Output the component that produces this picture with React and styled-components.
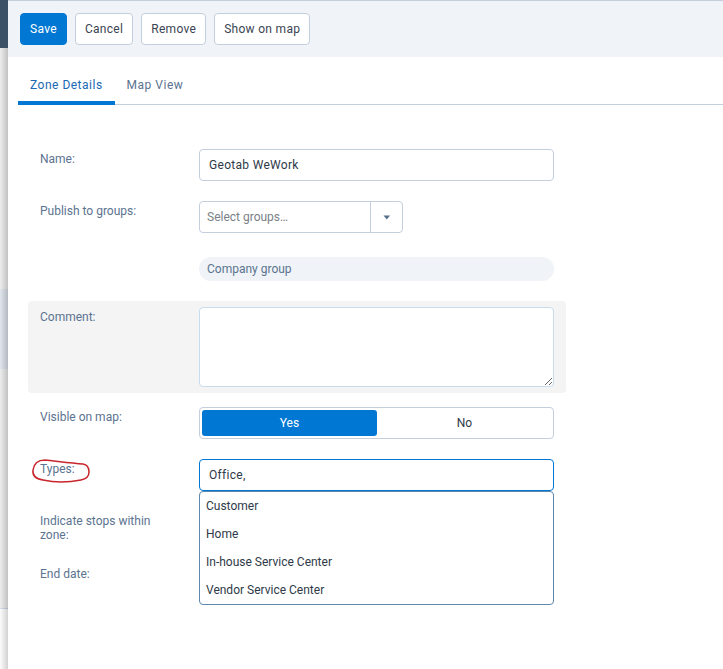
import React from "react"
import styled, { createGlobalStyle } from 'styled-components';

const GlobalStyle = createGlobalStyle`
  html, body {
    margin: 0;
    padding: 0;
    background: #fff;
    overflow: hidden;
  }
  * {
    box-sizing: border-box;
  }
`;

const Shell = styled.div`
  display: flex;
  height: 100vh;
  font-family: Roboto, "Liberation Sans", sans-serif;
  font-size: 12px;
`;

const SideStrip = styled.div`
  position: relative;
  flex: 0 0 8px;
  display: flex;
  flex-direction: column;
  &::after {
    content: "";
    position: absolute;
    inset: 48px 0 0 0;
    background: linear-gradient(to right, rgba(255,255,255,0.3), rgba(0,0,0,0.16));
  }
`;

const StripPart = styled.div`
  flex: ${p => p.$h ? `0 0 ${p.$h}px` : '1'};
  background: ${p => p.$bg};
`;

const Main = styled.div`
  flex: 1;
  min-width: 0;
`;

const Toolbar = styled.div`
  display: flex;
  gap: 8px;
  height: 57px;
  padding: 12px 12px;
  background: #f0f3f7;
  border-top: 1px solid #c3cfdd;
`;

const Button = styled.button`
  height: 32px;
  padding: 0 9px;
  font: inherit;
  letter-spacing: 0.3px;
  color: ${p => p.$primary ? '#fff' : '#3a4452'};
  background: ${p => p.$primary ? '#0078d3' : '#fff'};
  border: 1px solid ${p => p.$primary ? '#0078d3' : '#c3cfdd'};
  border-radius: 4px;
`;

const TabBar = styled.div`
  display: flex;
  margin-left: 10px;
  padding-top: 8px;
  border-bottom: 1px solid #c3cfdd;
`;

const Tab = styled.div`
  display: flex;
  align-items: center;
  height: 40px;
  margin-bottom: -1px;
  padding: 4px 12px 0;
  letter-spacing: 0.5px;
  color: ${p => p.$active ? '#1a68b3' : '#5b7390'};
  border-bottom: 4px solid ${p => p.$active ? '#0078d3' : 'transparent'};
`;

const Form = styled.div`
  padding: 44px 0 0 20px;
  width: 558px;
`;

const Row = styled.div`
  position: relative;
  display: flex;
  margin-bottom: ${p => p.$gap ?? 20}px;
  padding: ${p => p.$shaded ? '6px 12px' : '0 12px'};
  background: ${p => p.$shaded ? '#f4f4f4' : 'transparent'};
  border-radius: ${p => p.$shaded ? '4px' : '0'};
`;

const Label = styled.div`
  flex: 0 0 159px;
  padding: 3px 20px 0 0;
  line-height: 14px;
  color: #5b7390;
`;

const Control = styled.div`
  position: relative;
  flex: 0 0 355px;
`;

const TextInput = styled.input`
  display: block;
  width: 100%;
  height: 32px;
  padding: 0 9px;
  font: inherit;
  letter-spacing: 0.3px;
  color: #2f3a48;
  background: #fff;
  border: 1px solid ${p => p.$focused ? '#0078d3' : '#c3cfdd'};
  border-radius: 4px;
  outline: none;
`;

const CommentBox = styled.textarea`
  display: block;
  width: 100%;
  height: 80px;
  background: #fff;
  border: 1px solid #c9dcec;
  border-radius: 4px;
  outline: none;
`;

const SelectBox = styled.div`
  display: flex;
  width: 204px;
  height: 32px;
  background: #fff;
  border: 1px solid #c3cfdd;
  border-radius: 4px;
`;

const SelectText = styled.div`
  flex: 1;
  padding-left: 7px;
  line-height: 30px;
  color: #7b7f86;
`;

const SelectArrow = styled.div`
  display: flex;
  flex: 0 0 32px;
  align-items: center;
  justify-content: center;
  border-left: 1px solid #c3cfdd;
`;

const Chip = styled.div`
  height: 24px;
  padding-left: 8px;
  line-height: 24px;
  color: #5b7390;
  background: #f0f3f7;
  border-radius: 12px;
`;

const Toggle = styled.div`
  display: flex;
  height: 32px;
  padding: 2px 1px 2px 2px;
  background: #fff;
  border: 1px solid #c3cfdd;
  border-radius: 4px;
`;

const ToggleOption = styled.div`
  flex: 1;
  line-height: 26px;
  text-align: center;
  color: ${p => p.$on ? '#fff' : '#2f3a48'};
  background: ${p => p.$on ? '#0078d3' : 'transparent'};
  border-radius: 3px;
`;

const Dropdown = styled.div`
  position: absolute;
  top: 32px;
  left: 0;
  right: 0;
  z-index: 2;
  height: 114px;
  background: #fff;
  border: 1px solid #5f87ad;
  border-radius: 4px;
`;

const DropdownItem = styled.div`
  height: 28px;
  padding-left: 6px;
  line-height: 28px;
  color: #2f3a48;
`;

const Scribble = styled.svg`
  position: absolute;
  top: -1px;
  left: 3px;
  width: 60px;
  height: 26px;
  overflow: visible;
  pointer-events: none;
`;

const App = () => {
  return (
    <Shell>
      <GlobalStyle />
      <SideStrip>
        <StripPart $h={48} $bg="#3d5166" />
        <StripPart $h={241} $bg="#e6e6e6" />
        <StripPart $h={80} $bg="#d6dce6" />
        <StripPart $h={239} $bg="#e6e6e6" />
        <StripPart $h={1} $bg="#c3cfdd" />
        <StripPart $bg="#fbfbfb" />
      </SideStrip>
      <Main>
        <Toolbar>
          <Button $primary>Save</Button>
          <Button>Cancel</Button>
          <Button>Remove</Button>
          <Button>Show on map</Button>
        </Toolbar>
        <TabBar>
          <Tab $active>Zone Details</Tab>
          <Tab>Map View</Tab>
        </TabBar>
        <Form>
          <Row>
            <Label>Name:</Label>
            <Control><TextInput value="Geotab WeWork" readOnly /></Control>
          </Row>
          <Row $gap={24}>
            <Label>Publish to groups:</Label>
            <Control>
              <SelectBox>
                <SelectText>Select groups…</SelectText>
                <SelectArrow>
                  <svg width="8" height="5" viewBox="0 0 8 5"><path d="M0.5 0.5h6.5L3.75 4.5z" fill="#56708c" /></svg>
                </SelectArrow>
              </SelectBox>
            </Control>
          </Row>
          <Row>
            <Label />
            <Control><Chip>Company group</Chip></Control>
          </Row>
          <Row $shaded $gap={14}>
            <Label>Comment:</Label>
            <Control><CommentBox readOnly /></Control>
          </Row>
          <Row>
            <Label>Visible on map:</Label>
            <Control>
              <Toggle>
                <ToggleOption $on>Yes</ToggleOption>
                <ToggleOption>No</ToggleOption>
              </Toggle>
            </Control>
          </Row>
          <Row>
            <Label>Types:</Label>
            <Scribble viewBox="0 0 60 26">
              <path
                d="M2 12C3 5 8 2 14 2C24 3 40 5 52 6C57 7 58 11 58 14C58 19 55 21 50 22C40 24 25 25 12 22C6 21 1 19 2 12Z"
                fill="none"
                stroke="#c8262c"
                strokeWidth="1.5"
              />
            </Scribble>
            <Control>
              <TextInput $focused value="Office," readOnly />
              <Dropdown>
                <DropdownItem>Customer</DropdownItem>
                <DropdownItem>Home</DropdownItem>
                <DropdownItem>In-house Service Center</DropdownItem>
                <DropdownItem>Vendor Service Center</DropdownItem>
              </Dropdown>
            </Control>
          </Row>
          <Row $gap={21}>
            <Label>Indicate stops within zone:</Label>
            <Control>
              <Toggle>
                <ToggleOption>Yes</ToggleOption>
                <ToggleOption>No</ToggleOption>
              </Toggle>
            </Control>
          </Row>
          <Row>
            <Label>End date:</Label>
            <Control><TextInput readOnly /></Control>
          </Row>
        </Form>
      </Main>
    </Shell>
  );
}
export default App;
